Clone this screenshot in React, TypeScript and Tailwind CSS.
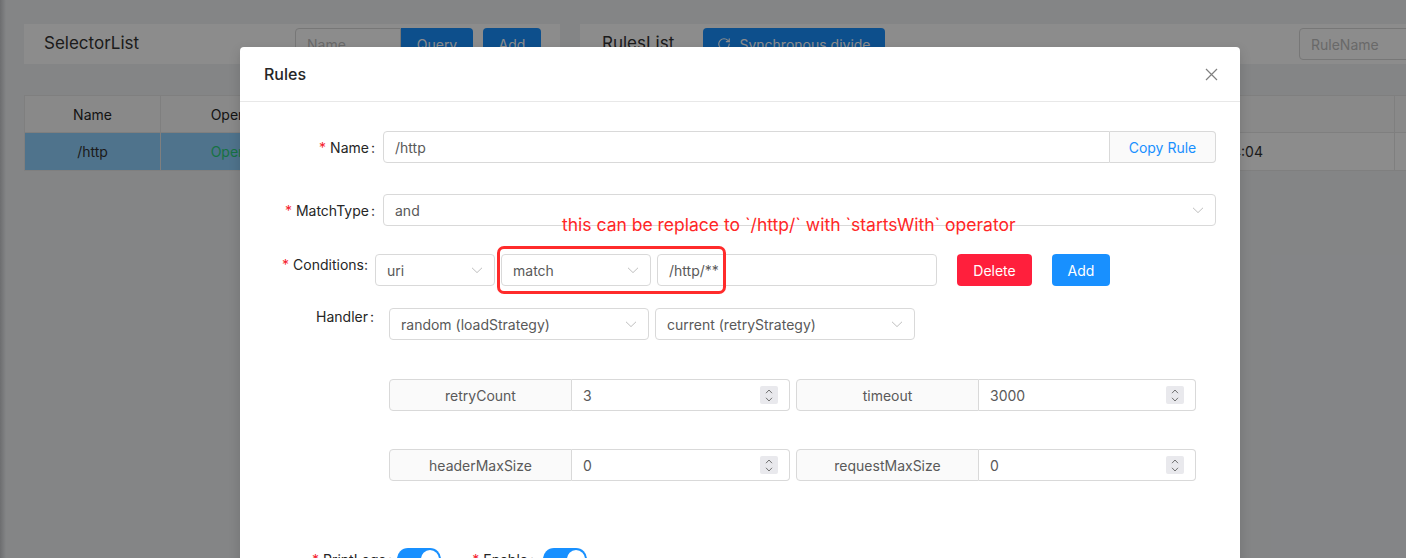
import React from "react";
import { RotateCw } from "lucide-react";

const Chevron = () => (
  <svg width="12" height="12" viewBox="0 0 12 12" className="shrink-0">
    <path d="M1 3.8 L6 8.6 L11 3.8" fill="none" stroke="#bfbfbf" strokeWidth="1" />
  </svg>
);

const Select = ({ value, className = "" }: { value: string; className?: string }) => (
  <div
    className={`flex items-center justify-between h-[32px] border border-[#d9d9d9] rounded-[4px] bg-white pl-[11px] pr-[11px] text-[14px] text-[#595959] ${className}`}
  >
    <span>{value}</span>
    <Chevron />
  </div>
);

const Stepper = () => (
  <div className="w-[18px] h-[18px] bg-[#e9e9ed] rounded-[2px] flex flex-col items-center justify-center gap-[3px]">
    <svg width="8" height="5" viewBox="0 0 8 5">
      <path d="M1 4.2 L4 1 L7 4.2" fill="none" stroke="#707070" strokeWidth="1" />
    </svg>
    <svg width="8" height="5" viewBox="0 0 8 5">
      <path d="M1 0.8 L4 4 L7 0.8" fill="none" stroke="#707070" strokeWidth="1" />
    </svg>
  </div>
);

const NumGroup = ({ label, value, className = "" }: { label: string; value: string; className?: string }) => (
  <div className={`flex h-[32px] ${className}`}>
    <div className="w-[183px] shrink-0 flex items-center justify-center bg-[#fafafa] border border-[#d9d9d9] rounded-l-[4px] text-[14px] text-[#595959]">
      {label}
    </div>
    <div className="flex-1 flex items-center justify-between border border-l-0 border-[#d9d9d9] rounded-r-[4px] pl-[11px] pr-[11px] text-[14px] text-[#595959]">
      <span>{value}</span>
      <Stepper />
    </div>
  </div>
);

const Req = () => <span className="text-[#f5222d] mr-[4px] text-[14px]">*</span>;

const Switch = () => (
  <div className="w-[44px] h-[22px] rounded-full bg-[#1890ff] flex items-center justify-end pr-[2px] shrink-0">
    <div className="w-[18px] h-[18px] rounded-full bg-white" />
  </div>
);

export default function App() {
  return (
    <div
      className="relative w-[1406px] h-[558px] overflow-hidden bg-[#f0f2f5] text-[14px]"
      style={{ fontFamily: "Inter, 'Noto Sans', sans-serif" }}
    >
      {/* underlying page */}
      <div className="flex h-full">
        <div className="w-[6px] shrink-0 bg-gradient-to-r from-[#c6c8cb] to-[#f0f2f5]" />
        <div className="flex-1 flex gap-[20px] pl-[18px] pt-[24px] overflow-hidden">
          {/* left column */}
          <div className="w-[536px] shrink-0">
            <div className="h-[40px] bg-white flex items-center pl-[20px] pr-[19px]">
              <span className="text-[17px] text-[#333]">SelectorList</span>
              <div className="ml-auto flex items-center">
                <div className="w-[106px] h-[32px] border border-[#d9d9d9] rounded-l-[4px] pl-[11px] flex items-center text-[#bfbfbf] bg-white">
                  Name
                </div>
                <div className="w-[72px] h-[32px] bg-[#1890ff] text-white rounded-r-[4px] flex items-center justify-center">
                  Query
                </div>
                <div className="ml-[10px] w-[58px] h-[32px] bg-[#1890ff] text-white rounded-[4px] flex items-center justify-center">
                  Add
                </div>
              </div>
            </div>
            <div className="mt-[31px] border border-[#e8e8e8] bg-white">
              <div className="flex h-[37px] bg-[#fafafa] border-b border-[#e8e8e8] text-[#262626]">
                <div className="w-[136px] flex items-center justify-center border-r border-[#e8e8e8]">Name</div>
                <div className="w-[136px] flex items-center justify-center border-r border-[#e8e8e8]">Open</div>
                <div className="flex-1" />
              </div>
              <div className="flex h-[37px] bg-[#91d1ff] text-[#333]">
                <div className="w-[136px] flex items-center justify-center border-r border-[#e8e8e8]">/http</div>
                <div className="w-[136px] flex items-center justify-center border-r border-[#e8e8e8] text-[#2bd07a]">Open</div>
                <div className="flex-1" />
              </div>
            </div>
          </div>
          {/* right column */}
          <div className="w-[900px] shrink-0">
            <div className="h-[40px] bg-white flex items-center pl-[22px]">
              <span className="w-[101px] shrink-0 text-[17px] text-[#333]">RulesList</span>
              <div className="w-[182px] h-[32px] shrink-0 bg-[#1890ff] text-white rounded-[4px] flex items-center justify-center gap-[8px]">
                <RotateCw size={14} strokeWidth={2} />
                <span>Synchronous divide</span>
              </div>
              <div className="ml-[414px] w-[200px] h-[32px] shrink-0 border border-[#d9d9d9] rounded-[4px] pl-[11px] flex items-center text-[#bfbfbf] bg-white">
                RuleName
              </div>
            </div>
            <div className="mt-[31px] border border-[#e8e8e8] bg-white">
              <div className="flex h-[37px] bg-[#fafafa] border-b border-[#e8e8e8] text-[#262626]">
                <div className="w-[416px] border-r border-[#e8e8e8]" />
                <div className="w-[398px] border-r border-[#e8e8e8]" />
                <div className="flex-1" />
              </div>
              <div className="flex h-[37px] bg-white text-[#333]">
                <div className="w-[416px] border-r border-[#e8e8e8]" />
                <div className="w-[398px] flex items-center justify-center border-r border-[#e8e8e8]">
                  2021-08-11 16:24:04
                </div>
                <div className="flex-1" />
              </div>
            </div>
          </div>
        </div>
      </div>

      {/* mask + modal */}
      <div className="absolute inset-0 bg-black/45 pl-[240px] pt-[47px]">
        <div className="relative w-[1000px] h-[600px] bg-white rounded-[4px] shadow-[0_4px_12px_rgba(0,0,0,0.15)]">
          <div className="h-[55px] flex items-center justify-between pl-[24px] pr-[22px] border-b border-[#e8e8e8]">
            <span className="text-[16px] font-medium text-[#262626]">Rules</span>
            <svg width="13" height="13" viewBox="0 0 13 13">
              <path d="M1 1 L12 12 M12 1 L1 12" stroke="#808080" strokeWidth="1.2" />
            </svg>
          </div>

          <div className="px-[24px] flex flex-col text-[#262626]">
            {/* Name */}
            <div className="mt-[29px] flex items-center h-[32px]">
              <div className="w-[119px] shrink-0 text-right pr-[8px]">
                <Req />
                Name<span className="ml-[2px]">:</span>
              </div>
              <div className="flex-1 flex h-[32px]">
                <div className="flex-1 flex items-center border border-[#d9d9d9] rounded-l-[4px] pl-[11px] text-[#595959]">
                  /http
                </div>
                <div className="w-[106px] flex items-center justify-center bg-[#fafafa] border border-l-0 border-[#d9d9d9] rounded-r-[4px] text-[#1890ff]">
                  Copy Rule
                </div>
              </div>
            </div>

            {/* MatchType */}
            <div className="mt-[31px] flex items-center h-[32px]">
              <div className="w-[119px] shrink-0 text-right pr-[8px]">
                <Req />
                MatchType<span className="ml-[2px]">:</span>
              </div>
              <Select value="and" className="flex-1" />
            </div>

            {/* Conditions */}
            <div className="mt-[28px] flex items-start h-[32px]">
              <div className="w-[111px] shrink-0 text-right pr-[7px] leading-[22px]">
                <Req />
                Conditions:
              </div>
              <Select value="uri" className="w-[120px]" />
              <Select value="match" className="w-[150px] ml-[6px]" />
              <div className="w-[280px] ml-[6px] h-[32px] flex items-center border border-[#d9d9d9] rounded-[4px] pl-[11px] text-[#595959]">
                /http/**
              </div>
              <div className="ml-[20px] w-[75px] h-[32px] rounded-[4px] bg-[#ff1f3c] text-white flex items-center justify-center">
                Delete
              </div>
              <div className="ml-[20px] w-[58px] h-[32px] rounded-[4px] bg-[#1890ff] text-white flex items-center justify-center">
                Add
              </div>
            </div>

            {/* Handler */}
            <div className="mt-[22px] flex items-start h-[32px]">
              <div className="w-[125px] shrink-0 text-right pr-[15px] leading-[18px]">
                Handler<span className="ml-[2px]">:</span>
              </div>
              <Select value="random (loadStrategy)" className="w-[260px]" />
              <Select value="current (retryStrategy)" className="w-[260px] ml-[6px]" />
            </div>

            {/* retry / timeout */}
            <div className="mt-[39px] flex pl-[125px]">
              <NumGroup label="retryCount" value="3" className="w-[401px]" />
              <NumGroup label="timeout" value="3000" className="w-[400px] ml-[6px]" />
            </div>

            {/* header / request */}
            <div className="mt-[38px] flex pl-[125px]">
              <NumGroup label="headerMaxSize" value="0" className="w-[401px]" />
              <NumGroup label="requestMaxSize" value="0" className="w-[400px] ml-[6px]" />
            </div>

            {/* switches */}
            <div className="mt-[67px] flex items-center pl-[48px] h-[22px]">
              <div className="w-[85px] shrink-0 text-right pr-[10px]">
                <Req />
                PrintLogs<span className="ml-[2px]">:</span>
              </div>
              <Switch />
              <div className="w-[102px] shrink-0 text-right pr-[9px]">
                <Req />
                Enable<span className="ml-[2px]">:</span>
              </div>
              <Switch />
            </div>
          </div>

          {/* annotations */}
          <div className="absolute left-[322px] top-[167px] text-[17.5px] leading-[22px] text-[#ff2626] whitespace-nowrap">
            this can be replace to `/http/` with `startsWith` operator
          </div>
          <div className="absolute left-[257px] top-[199px] w-[229px] h-[48px] border-[3px] border-[#ff2b2b] rounded-[7px]" />
        </div>
      </div>
    </div>
  );
}
